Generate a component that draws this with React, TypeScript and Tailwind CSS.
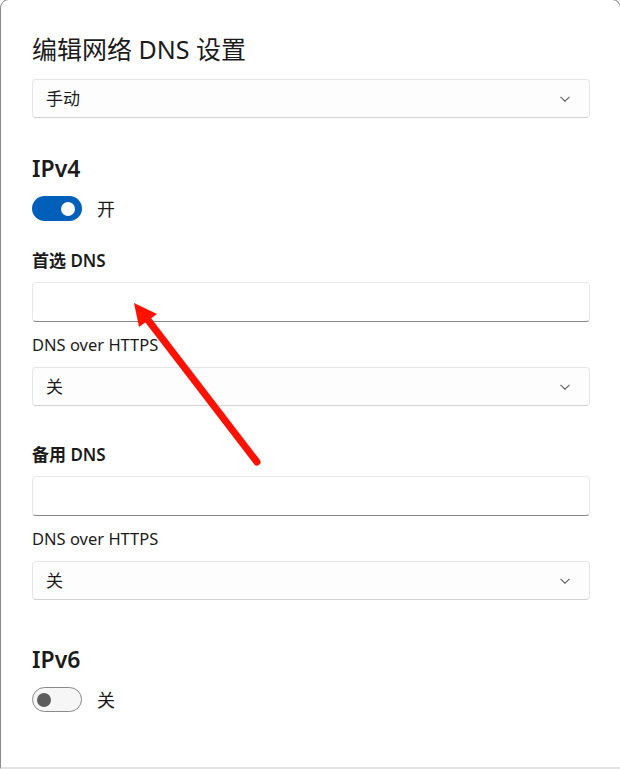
import React from 'react';

const font = { fontFamily: '"Noto Sans", "Noto Sans CJK SC", sans-serif' };

const Chevron: React.FC = () => (
  <svg width="12" height="8" viewBox="0 0 12 8" className="text-[#5f5f5f]">
    <path d="M1.5 1.8 L6 6.2 L10.5 1.8" fill="none" stroke="currentColor" strokeWidth="1.1" />
  </svg>
);

const Select: React.FC<{ value: string; className?: string }> = ({ value, className = '' }) => (
  <div
    className={`flex h-[39px] items-center justify-between rounded-[4px] border border-[#e6e6e6] border-b-[#d2d2d2] bg-[#fdfdfd] pl-[13px] pr-[18px] ${className}`}
  >
    <span className="text-[17px] leading-none text-[#1b1b1b]">{value}</span>
    <Chevron />
  </div>
);

const Field: React.FC<{ className?: string }> = ({ className = '' }) => (
  <div
    className={`h-[40px] rounded-[4px] border border-[#e8e8e8] border-b-[#878787] bg-white ${className}`}
  />
);

const Toggle: React.FC<{ on: boolean; label: string; className?: string }> = ({ on, label, className = '' }) => (
  <div className={`flex items-center gap-[15px] ${className}`}>
    {on ? (
      <div className="flex h-[25px] w-[50px] items-center justify-end rounded-full bg-[#005fb8] pr-[7px]">
        <div className="h-[14px] w-[14px] rounded-full bg-white" />
      </div>
    ) : (
      <div className="flex h-[25px] w-[50px] items-center rounded-full border border-[#8a8a8a] bg-[#f6f6f6] pl-[4px]">
        <div className="h-[14px] w-[14px] rounded-full bg-[#5d5d5d]" />
      </div>
    )}
    <span className="text-[18px] leading-none text-[#1b1b1b]">{label}</span>
  </div>
);

export default function App() {
  return (
    <div className="relative h-[769px] w-[620px] overflow-hidden bg-white" style={font}>
      <div className="-mt-px h-[770px] w-[621px] rounded-t-[9px] border-x border-t border-b-2 border-x-[#8c8c8c] border-t-[#8c8c8c] border-b-[#e3e3e3] bg-white pl-[31px] pr-[30px] pt-[33px] text-[#1b1b1b]">
        <h1 className="h-[32px] text-[25px] font-normal leading-[32px]">编辑网络 DNS 设置</h1>
        <Select value="手动" className="mt-[14px]" />

        <h2 className="mt-[34px] h-[32px] text-[23px] font-semibold leading-[32px]">IPv4</h2>
        <Toggle on label="开" className="mt-[12px]" />

        <div className="mt-[28px] h-[24px] text-[17px] font-semibold leading-[24px]">首选 DNS</div>
        <Field className="mt-[9px]" />
        <div className="mt-[12px] h-[22px] text-[16.5px] leading-[22px]">DNS over HTTPS</div>
        <Select value="关" className="mt-[11px]" />

        <div className="mt-[37px] h-[24px] text-[17px] font-semibold leading-[24px]">备用 DNS</div>
        <Field className="mt-[9px]" />
        <div className="mt-[12px] h-[22px] text-[16.5px] leading-[22px]">DNS over HTTPS</div>
        <Select value="关" className="mt-[11px]" />

        <h2 className="mt-[43px] h-[32px] text-[23px] font-semibold leading-[32px]">IPv6</h2>
        <Toggle on={false} label="关" className="mt-[12px]" />
      </div>

      {/* red annotation arrow */}
      <svg className="pointer-events-none absolute inset-0" width="620" height="769">
        <line x1="257" y1="462" x2="148" y2="320" stroke="#ff1100" strokeWidth="7" strokeLinecap="round" />
        <polygon points="134,303 157,314 139,327" fill="#ff1100" />
      </svg>
    </div>
  );
}
